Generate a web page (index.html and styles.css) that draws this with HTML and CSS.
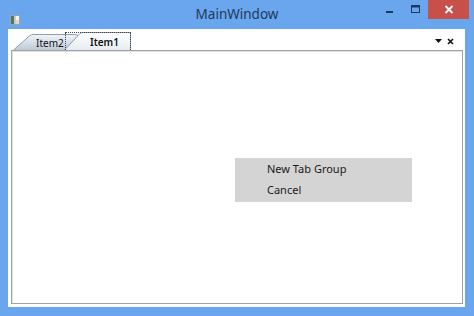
FILE: index.html
```html
<!DOCTYPE html>
<html lang="en">
  <head>
    <meta charset="UTF-8" />
    <title>MainWindow</title>
    <link rel="stylesheet" href="styles.css">
  </head>
  <body>
    <div class="window">
      <div class="titlebar">
        <div class="app-icon">
          <svg width="10" height="10" viewBox="0 0 10 10">
            <rect x="0.5" y="0.5" width="9" height="9" fill="#f4f4f4" stroke="#9aa4ad"/>
            <rect x="1" y="1" width="3" height="8" fill="#4c7a5a"/>
            <rect x="4" y="1" width="2" height="8" fill="#c9c9c9"/>
            <rect x="6" y="5" width="3" height="4" fill="#e4d7c4"/>
          </svg>
        </div>
        <div class="title">MainWindow</div>
        <div class="caption-buttons">
          <div class="cbtn">
            <svg width="9" height="9" viewBox="0 0 9 9"><rect x="1" y="6" width="7" height="2" fill="#1e395b"/></svg>
          </div>
          <div class="cbtn">
            <svg width="9" height="9" viewBox="0 0 9 9"><rect x="0.5" y="0.5" width="8" height="7" fill="none" stroke="#1e395b"/><rect x="0.5" y="0.5" width="8" height="2" fill="#1e395b"/></svg>
          </div>
          <div class="cbtn close">
            <svg width="10" height="9" viewBox="0 0 10 9"><path d="M1.5 1 L8.5 8 M8.5 1 L1.5 8" stroke="#fff" stroke-width="1.8"/></svg>
          </div>
        </div>
      </div>

      <div class="client">
        <div class="tabstrip">
          <div class="tab item2">
            <svg class="tab-shape" width="66" height="16" viewBox="0 0 66 16">
              <defs>
                <linearGradient id="g2" x1="0" y1="0" x2="0" y2="1">
                  <stop offset="0" stop-color="#f1f4f8"/>
                  <stop offset="1" stop-color="#bdc9d6"/>
                </linearGradient>
              </defs>
              <path d="M0.5 16 L17 1.5 Q18.5 0.5 20 0.5 L62 0.5 Q65.5 0.5 65.5 4 L65.5 16" fill="url(#g2)" stroke="#8f9fb2"/>
            </svg>
            <span class="tab-label">Item2</span>
          </div>
          <div class="tab item1">
            <svg class="tab-shape" width="67" height="18" viewBox="0 0 67 18">
              <defs>
                <linearGradient id="g1" x1="0" y1="0" x2="0" y2="1">
                  <stop offset="0" stop-color="#ffffff"/>
                  <stop offset="1" stop-color="#e6ecf2"/>
                </linearGradient>
              </defs>
              <path d="M0.5 18 L16 1.5 Q17.5 0.5 19 0.5 L65 0.5 Q66.5 0.5 66.5 2 L66.5 18" fill="url(#g1)" stroke="#8f9fb2"/>
            </svg>
            <span class="tab-label">Item1</span>
          </div>
          <div class="strip-tools">
            <svg width="7" height="4" viewBox="0 0 7 4"><path d="M0 0 L7 0 L3.5 4 Z" fill="#111"/></svg>
            <svg width="7" height="7" viewBox="0 0 7 7"><path d="M1 1 L6 6 M6 1 L1 6" stroke="#111" stroke-width="1.6"/></svg>
          </div>
        </div>
        <div class="panel"></div>
      </div>

      <div class="menu">
        <div class="menu-item">New Tab Group</div>
        <div class="menu-item">Cancel</div>
      </div>
    </div>
  </body>
</html>
```

FILE: styles.css
```css
body {
  margin: 0;
  font-family: "Noto Sans", "Open Sans", sans-serif;
}

.window {
  position: relative;
  display: flex;
  flex-direction: column;
  width: 474px;
  height: 316px;
  background-color: #69a6ee;
}

.titlebar {
  display: grid;
  grid-template-columns: 1fr auto 1fr;
  height: 29px;
}

.app-icon {
  padding: 8px 0 0 10px;
}

.title {
  padding-top: 5px;
  font-size: 13.5px;
  color: #1e395b;
}

.caption-buttons {
  display: flex;
  justify-content: flex-end;
  align-items: flex-start;
  padding-right: 5px;
}

.cbtn {
  display: flex;
  align-items: center;
  justify-content: center;
  width: 26px;
  height: 19px;
}

.close {
  width: 41px;
  background-color: #c7504b;
}

.client {
  flex: 1;
  display: flex;
  flex-direction: column;
  margin: 0 9px 9px 8px;
  padding: 3px 2px 3px 3px;
  background: #fff;
}

.tabstrip {
  display: flex;
  align-items: flex-end;
  height: 18px;
  padding-left: 2px;
}

.tab {
  position: relative;
  font-size: 10px;
  color: #111;
}

.tab-shape {
  position: absolute;
  left: 0;
  top: 0;
}

.tab-label {
  position: relative;
  display: block;
}

.item2 {
  width: 66px;
  height: 16px;
}

.item2 .tab-label {
  padding: 2px 0 0 23px;
}

.item1 {
  width: 67px;
  height: 18px;
  margin-left: -15px;
  font-weight: 600;
}

.item1 .tab-label {
  padding: 3px 0 0 26px;
}

.item1::after {
  content: "";
  position: absolute;
  left: 1px;
  top: 0;
  right: 0;
  bottom: 0;
  border: 1px dotted #444;
  border-bottom: none;
}

.strip-tools {
  display: flex;
  align-items: center;
  gap: 5px;
  margin-left: auto;
  margin-right: 9px;
  height: 18px;
}

.panel {
  flex: 1;
  border: 1px solid #a2a2a2;
  box-shadow: inset 1px 1px 0 #e2e2e2;
}

.menu {
  position: absolute;
  left: 235px;
  top: 158px;
  width: 177px;
  padding: 1px 0;
  background-color: #d4d4d4;
}

.menu-item {
  height: 21px;
  line-height: 20px;
  padding-left: 32px;
  font-size: 11px;
  color: #1a1a1a;
}
```
